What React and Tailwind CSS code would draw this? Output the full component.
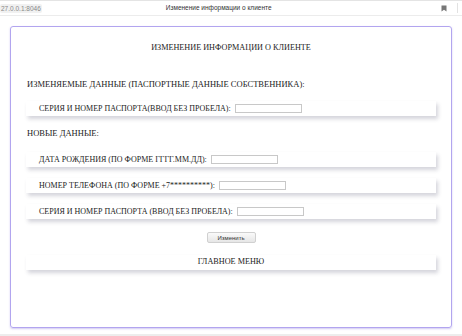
import React from 'react';

const serif = { fontFamily: '"Liberation Serif", "Times New Roman", serif' };

const Row = ({ label }) => (
  <div className="flex h-[15px] items-center bg-white pl-[13px] shadow-[2px_3px_4px_rgba(60,60,90,0.22)]">
    <span className="text-[8px] leading-none text-[#222]">{label}</span>
    <input
      type="text"
      className="ml-[4px] h-[9px] w-[67px] border border-[#c8c8c8] bg-white outline-none"
    />
  </div>
);

export default function App() {
  return (
    <div className="relative h-[336px] w-[462px] overflow-hidden bg-white">
      {/* browser top bar */}
      <div className="flex h-[16px] items-center border-b border-[#ececec] border-t border-t-[#e4e4e4] pr-[4px]">
        <span className="rounded-[2px] bg-[#f1f1f1] px-[1px] text-[6.5px] leading-[9px] text-[#888] font-['Liberation_Sans',Arial,sans-serif]">
          27.0.0.1:8046
        </span>
        <span className="ml-[124px] flex-1 text-[6.5px] text-[#333] font-['Liberation_Sans',Arial,sans-serif]">
          Изменение информации о клиенте
        </span>
        <svg width="6" height="7" viewBox="0 0 6 7" className="mr-[10px]">
          <path d="M0.5 0.5h5v6l-2.5-1.8-2.5 1.8z" fill="#777" />
        </svg>
        <div className="h-[10px] w-px bg-[#e2e2e2]" />
      </div>

      {/* card */}
      <div
        style={serif}
        className="mx-[10px] mt-[10px] h-[302px] rounded-[3px] border-[1.5px] border-[#b2a5ef] px-[15px] shadow-[0_1px_2px_rgba(120,100,220,0.35)]"
      >
        <div className="mt-[16px] text-center text-[8.2px] leading-[10px] text-[#222]">
          ИЗМЕНЕНИЕ ИНФОРМАЦИИ О КЛИЕНТЕ
        </div>
        <div className="mt-[26px] pl-[1px] text-[8.5px] leading-[10px] text-[#222]">
          ИЗМЕНЯЕМЫЕ ДАННЫЕ (ПАСПОРТНЫЕ ДАННЫЕ СОБСТВЕННИКА):
        </div>
        <div className="mt-[12px]">
          <Row label="СЕРИЯ И НОМЕР ПАСПОРТА(ВВОД БЕЗ ПРОБЕЛА):" />
        </div>
        <div className="mt-[12px] pl-[1px] text-[8.5px] leading-[10px] text-[#222]">НОВЫЕ ДАННЫЕ:</div>
        <div className="mt-[14px] flex flex-col gap-[11px]">
          <Row label="ДАТА РОЖДЕНИЯ (ПО ФОРМЕ ГГГГ.ММ.ДД):" />
          <Row label="НОМЕР ТЕЛЕФОНА (ПО ФОРМЕ +7**********):" />
          <Row label="СЕРИЯ И НОМЕР ПАСПОРТА (ВВОД БЕЗ ПРОБЕЛА):" />
        </div>
        <div className="mt-[13px] flex justify-center">
          <button className="h-[11px] w-[49px] rounded-[2px] border border-[#d0d0d0] bg-gradient-to-b from-[#fafafa] to-[#e6e6e6] text-[6px] leading-none text-[#333] font-['Liberation_Sans',Arial,sans-serif]">
            Изменить
          </button>
        </div>
        <div className="mt-[12px] flex h-[15px] items-center justify-center bg-white text-[8.2px] text-[#222] shadow-[2px_3px_4px_rgba(60,60,90,0.22)]">
          ГЛАВНОЕ МЕНЮ
        </div>
      </div>

      {/* bottom strip */}
      <div className="absolute bottom-0 left-0 h-[2px] w-full bg-[#ededed]" />
    </div>
  );
}
